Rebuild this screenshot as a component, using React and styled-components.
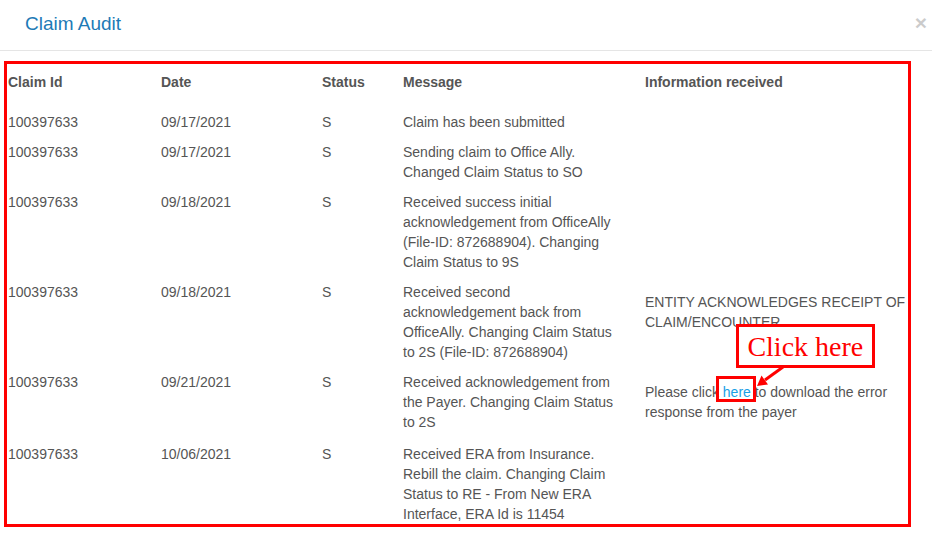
import React from "react";
import styled, { createGlobalStyle } from "styled-components";

const GlobalStyle = createGlobalStyle`
  body {
    margin: 0;
    background: #fff;
    font-family: "Liberation Sans", Arial, sans-serif;
  }
`;

const Modal = styled.div`
  width: 932px;
  height: 541px;
  background: #fff;
  overflow: hidden;
`;

const Header = styled.div`
  height: 51px;
  box-sizing: border-box;
  display: flex;
  align-items: center;
  justify-content: space-between;
  padding: 0 5px 2px 25px;
  border-bottom: 1px solid #e5e5e5;
`;

const Title = styled.h4`
  margin: 0;
  font-size: 19px;
  font-weight: normal;
  color: #1d7ab6;
`;

const Close = styled.button`
  border: 0;
  background: none;
  padding: 0 0 4px;
  font-family: "Liberation Sans", Arial, sans-serif;
  font-size: 21px;
  font-weight: bold;
  line-height: 1;
  color: #000;
  opacity: 0.2;
  cursor: pointer;
`;

const Body = styled.div`
  padding: 10px 0 0 4px;
`;

const AuditBox = styled.div`
  width: 907px;
  box-sizing: border-box;
  border: 3px solid #ff0000;
  padding: 8px 0 0 1px;
`;

const Table = styled.table`
  width: 100%;
  border-collapse: collapse;
  table-layout: fixed;
  font-size: 14px;
  line-height: 20px;
  color: #555;
`;

const Th = styled.th`
  text-align: left;
  font-weight: bold;
  padding: 0 0 10px;
  vertical-align: top;
`;

const Td = styled.td`
  padding: 10px ${(p) => p.$pr || 0}px 0 0;
  vertical-align: top;
`;

const Info = styled.p`
  margin: 10px 0 12px;
`;

const Link = styled.a`
  position: relative;
  color: #1a9fe6;
  text-decoration: none;

  &::after {
    content: "";
    position: absolute;
    inset: -8px -5px -2px -7px;
    border: 3px solid #ff0000;
  }
`;

const Callout = styled.span`
  position: absolute;
  left: 13px;
  top: -60px;
  width: 139px;
  height: 44px;
  box-sizing: border-box;
  border: 3px solid #ff0000;
  background: #fff;
  display: flex;
  align-items: center;
  justify-content: center;
  font-family: "Liberation Serif", "Times New Roman", serif;
  font-size: 28px;
  line-height: 1;
  color: #ff0000;
  white-space: nowrap;
  padding-top: 2px;
`;

const Arrow = styled.svg`
  position: absolute;
  left: 29px;
  top: -21px;
  overflow: visible;
`;

const rows = [
  { id: "100397633", date: "09/17/2021", status: "S", msg: "Claim has been submitted" },
  {
    id: "100397633",
    date: "09/17/2021",
    status: "S",
    msg: "Sending claim to Office Ally. Changed Claim Status to SO",
  },
  {
    id: "100397633",
    date: "09/18/2021",
    status: "S",
    msg: "Received success initial acknowledgement from OfficeAlly (File-ID: 872688904). Changing Claim Status to 9S",
  },
  {
    id: "100397633",
    date: "09/18/2021",
    status: "S",
    msg: "Received second acknowledgement back from OfficeAlly. Changing Claim Status to 2S (File-ID: 872688904)",
    info: "entity",
  },
  {
    id: "100397633",
    date: "09/21/2021",
    status: "S",
    msg: "Received acknowledgement from the Payer. Changing Claim Status to 2S",
    info: "download",
  },
  {
    id: "100397633",
    date: "10/06/2021",
    status: "S",
    msg: "Received ERA from Insurance. Rebill the claim. Changing Claim Status to RE - From New ERA Interface, ERA Id is 11454",
  },
];

const renderInfo = (info) => {
  if (info === "entity") {
    return <Info>ENTITY ACKNOWLEDGES RECEIPT OF CLAIM/ENCOUNTER</Info>;
  }
  if (info === "download") {
    return (
      <Info>
        Please click{" "}
        <Link href="#">
          here
          <Callout>Click here</Callout>
          <Arrow width="38" height="27" viewBox="0 0 38 27">
            <line x1="31" y1="4" x2="13" y2="17" stroke="#ff0000" strokeWidth="3" />
            <polygon points="5,23 16,21.5 9.5,12.5" fill="#ff0000" />
          </Arrow>
        </Link>{" "}
        to download the error response from the payer
      </Info>
    );
  }
  return null;
};

const App = () => {
  return (
    <Modal>
      <GlobalStyle />
      <Header>
        <Title>Claim Audit</Title>
        <Close aria-label="Close">×</Close>
      </Header>
      <Body>
        <AuditBox>
          <Table>
            <colgroup>
              <col style={{ width: 153 }} />
              <col style={{ width: 161 }} />
              <col style={{ width: 81 }} />
              <col style={{ width: 242 }} />
              <col />
            </colgroup>
            <thead>
              <tr>
                <Th>Claim Id</Th>
                <Th>Date</Th>
                <Th>Status</Th>
                <Th>Message</Th>
                <Th>Information received</Th>
              </tr>
            </thead>
            <tbody>
              {rows.map((row, i) => (
                <tr key={i}>
                  <Td>{row.id}</Td>
                  <Td>{row.date}</Td>
                  <Td>{row.status}</Td>
                  <Td $pr={20}>{row.msg}</Td>
                  <Td>{renderInfo(row.info)}</Td>
                </tr>
              ))}
            </tbody>
          </Table>
        </AuditBox>
      </Body>
    </Modal>
  );
};

export default App;
